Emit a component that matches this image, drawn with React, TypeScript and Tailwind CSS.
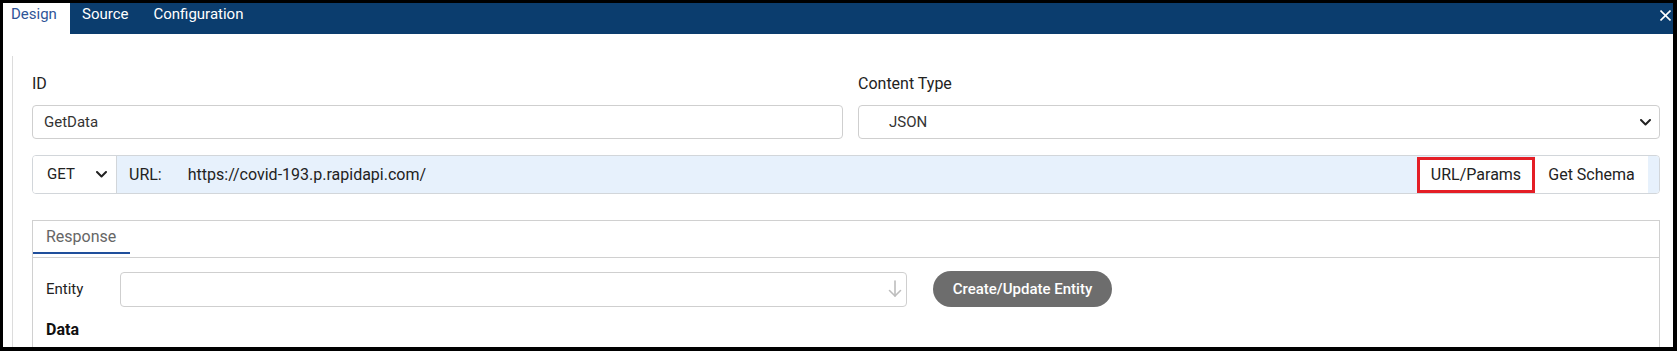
import React from "react";

function Chevron({ className }: { className?: string }) {
  return (
    <svg className={className} width="11" height="7" viewBox="0 0 11 7" fill="none">
      <polyline points="1,1 5.5,5.5 10,1" stroke="#222" strokeWidth="2" strokeLinecap="round" strokeLinejoin="round" />
    </svg>
  );
}

export default function App() {
  return (
    <div className="w-[1677px] h-[351px] bg-black pt-[3px] pl-[3px] pr-[4px] pb-[4px] font-['Roboto','Noto_Sans',sans-serif]">
      <div className="w-full h-full bg-white overflow-hidden flex flex-col">
        {/* Tab bar */}
        <div className="h-[31px] shrink-0 bg-[#0b3d6e] flex items-stretch">
          <div className="w-[67px] bg-white pl-[8px] pt-[1px] text-[15px] leading-[20px] text-[#2f5597]">Design</div>
          <div className="pl-[12px] pr-[13px] pt-[1px] text-[15px] leading-[20px] text-white">Source</div>
          <div className="pl-[12px] pr-[12px] pt-[1px] text-[15px] leading-[20px] text-white">Configuration</div>
          <div className="ml-auto pr-[2px] pt-[7px]">
            <svg width="11" height="11" viewBox="0 0 11 11" fill="none">
              <line x1="0.5" y1="0.5" x2="10.5" y2="10.5" stroke="#fff" strokeWidth="1.6" />
              <line x1="10.5" y1="0.5" x2="0.5" y2="10.5" stroke="#fff" strokeWidth="1.6" />
            </svg>
          </div>
        </div>

        {/* Body */}
        <div className="flex-1 pl-[9px] pt-[22px]">
          <div className="h-full border-l border-[#dcdcdc] pl-[19px] pt-[16px]">
            <div className="w-[1628px]">
              {/* ID / Content Type */}
              <div className="grid grid-cols-[811px_802px] gap-x-[15px]">
                <div>
                  <div className="h-[24px] leading-[24px] text-[16px] text-[#222] mb-[9px]">ID</div>
                  <div className="h-[34px] border border-[#cfcfcf] rounded-[4px] pl-[11px] flex items-center text-[15px] text-[#333]">GetData</div>
                </div>
                <div>
                  <div className="h-[24px] leading-[24px] text-[16px] text-[#222] mb-[9px]">Content Type</div>
                  <div className="h-[34px] border border-[#cfcfcf] rounded-[4px] pl-[30px] pr-[8px] flex items-center text-[15px] text-[#333]">
                    <span className="flex-1">JSON</span>
                    <Chevron />
                  </div>
                </div>
              </div>

              {/* URL bar */}
              <div className="mt-[16px] h-[39px] border border-[#d2d6da] rounded-[4px] flex overflow-hidden">
                <div className="w-[84px] shrink-0 bg-white border-r border-[#d2d6da] flex items-center pl-[14px] pr-[9px] text-[15px] text-[#222]">
                  <span className="flex-1">GET</span>
                  <Chevron />
                </div>
                <div className="flex-1 bg-[#e7f1fc] flex items-stretch pr-[11px]">
                  <div className="flex items-center pl-[12px] text-[16px] text-[#222]">
                    <span>URL:</span>
                    <span className="ml-[26px]">https://covid-193.p.rapidapi.com/</span>
                  </div>
                  <div className="ml-auto flex items-stretch">
                    <div className="self-end w-[118px] h-[36px] border-[3px] border-[#e41e26] bg-white flex justify-center items-center text-[16px] text-[#222]">
                      URL/Params
                    </div>
                    <div className="w-[113px] bg-white flex items-center justify-center text-[16px] text-[#222]">Get Schema</div>
                  </div>
                </div>
              </div>

              {/* Response panel */}
              <div className="mt-[26px] border border-[#d0d0d0] h-[200px]">
                <div className="flex flex-col">
                  <div className="w-[97px] h-[33px] border-b-2 border-[#1f4e9b] pl-[13px] flex items-center text-[16px] text-[#666]">
                    Response
                  </div>
                  <div className="mt-[3px] h-px bg-[#d0d0d0]" />
                </div>
                <div className="mt-[13px] pl-[13px] flex items-center">
                  <div className="w-[74px] text-[15px] text-[#222]">Entity</div>
                  <div className="w-[787px] h-[35px] border border-[#cfcfcf] rounded-[4px] flex items-center justify-end pr-[3px]">
                    <svg width="16" height="18" viewBox="0 0 16 18" fill="none">
                      <line x1="8" y1="1" x2="8" y2="16" stroke="#bdbdbd" strokeWidth="1.6" strokeLinecap="round" />
                      <polyline points="2.5,10.5 8,16 13.5,10.5" stroke="#bdbdbd" strokeWidth="1.6" strokeLinecap="round" strokeLinejoin="round" />
                    </svg>
                  </div>
                  <div className="ml-[26px] w-[179px] h-[36px] rounded-full bg-[#6d6d6d] text-white text-[15px] font-medium flex items-center justify-center">
                    Create/Update Entity
                  </div>
                </div>
                <div className="mt-[11px] pl-[13px] h-[24px] leading-[24px] text-[16px] font-bold text-[#111]">Data</div>
              </div>
            </div>
          </div>
        </div>
      </div>
    </div>
  );
}
